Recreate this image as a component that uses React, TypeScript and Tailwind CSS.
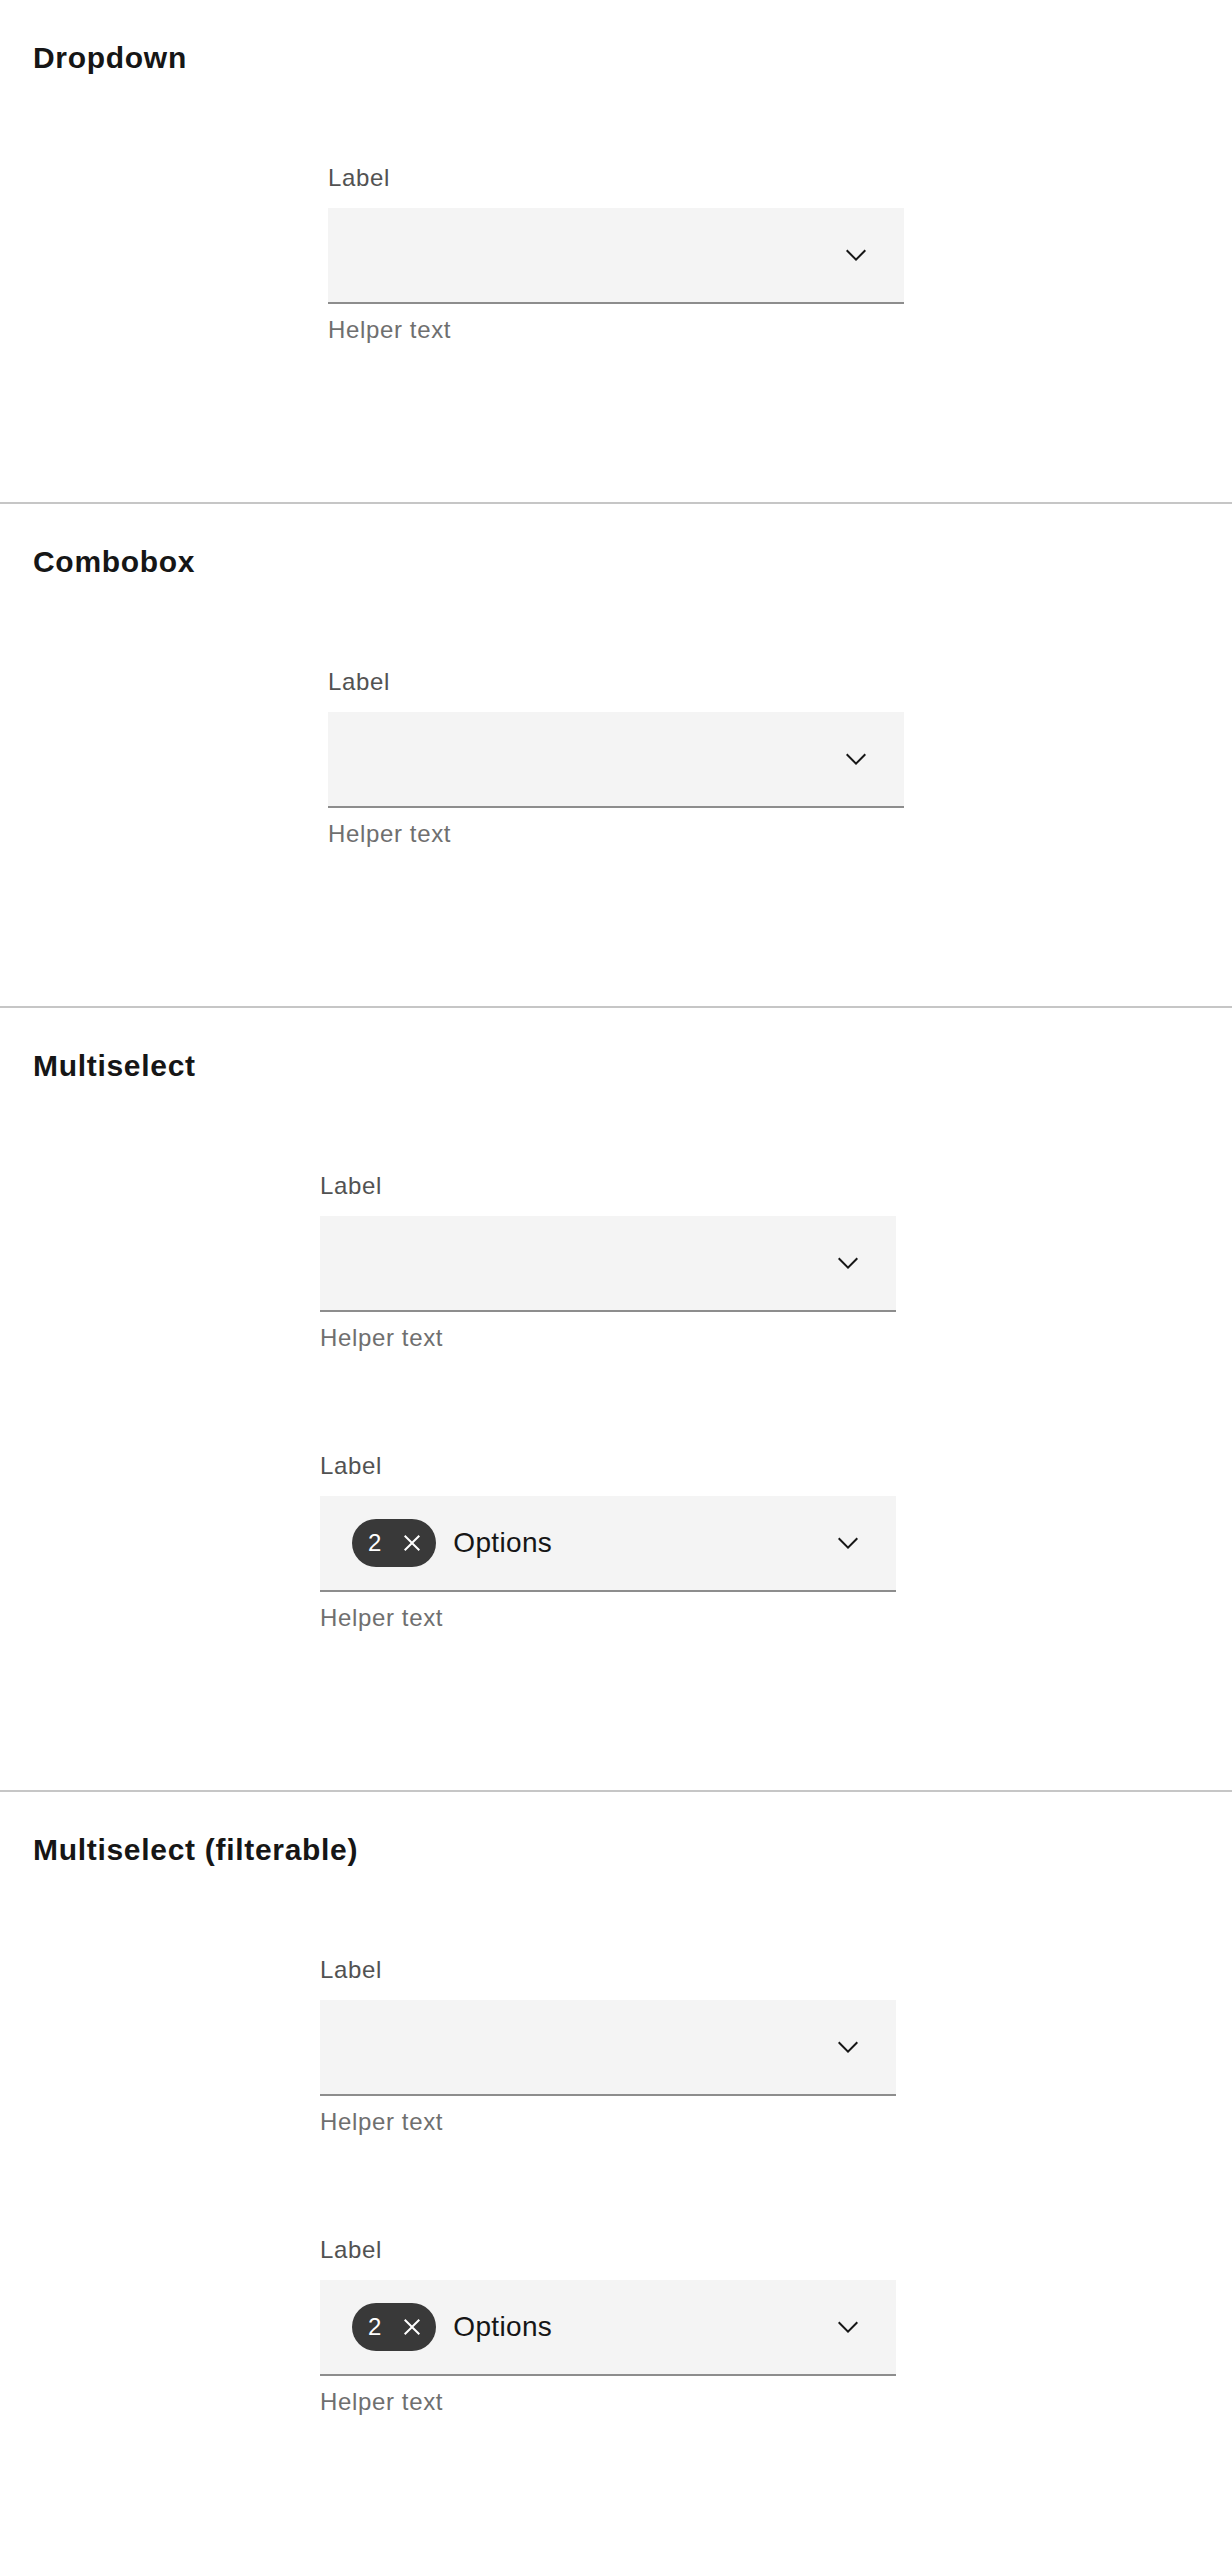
import { ReactNode } from "react";

function ChevronDown() {
  return (
    <svg width="32" height="32" viewBox="0 0 16 16" fill="#161616" aria-hidden>
      <path d="M8 11L3 6 3.7 5.3 8 9.6 12.3 5.3 13 6z" />
    </svg>
  );
}

function CloseIcon() {
  return (
    <svg width="32" height="32" viewBox="0 0 16 16" fill="#ffffff" aria-hidden>
      <path d="M12 4.7L11.3 4 8 7.3 4.7 4 4 4.7 7.3 8 4 11.3 4.7 12 8 8.7 11.3 12 12 11.3 8.7 8z" />
    </svg>
  );
}

function Field({ selected, offset }: { selected?: boolean; offset: "wide" | "narrow" }) {
  return (
    <div className={offset === "wide" ? "ml-[328px] w-[576px]" : "ml-[320px] w-[576px]"}>
      <label className="block text-[24px] leading-[32px] tracking-[0.64px] text-[#525252]">Label</label>
      <div className="mt-[14px] flex h-[96px] items-center border-b-2 border-[#8d8d8d] bg-[#f4f4f4] pl-[32px] pr-[32px]">
        {selected && (
          <>
            <span className="flex h-[48px] items-center rounded-full bg-[#393939] pl-[16px] pr-[8px] text-[24px] text-white">
              2
              <span className="ml-[15px] flex">
                <CloseIcon />
              </span>
            </span>
            <span className="ml-[17px] text-[28px] tracking-[0.32px] text-[#161616]">Options</span>
          </>
        )}
        <span className="ml-auto flex">
          <ChevronDown />
        </span>
      </div>
      <p className="mt-[10px] text-[24px] leading-[32px] tracking-[0.64px] text-[#6f6f6f]">Helper text</p>
    </div>
  );
}

function Section({ title, children, last }: { title: string; children: ReactNode; last?: boolean }) {
  return (
    <section className={last ? "pt-[38px] pb-[156px]" : "border-b-2 border-[#c6c6c6] pt-[38px] pb-[156px]"}>
      <h2 className="pl-[33px] text-[30px] font-bold leading-[40px] tracking-[0.7px] text-[#161616]">{title}</h2>
      <div className="mt-[84px] flex flex-col gap-[96px]">{children}</div>
    </section>
  );
}

export default function App() {
  return (
    <div className="w-[1232px] bg-white font-['Liberation_Sans',Arial,sans-serif]">
      <Section title="Dropdown">
        <Field offset="wide" />
      </Section>
      <Section title="Combobox">
        <Field offset="wide" />
      </Section>
      <Section title="Multiselect">
        <Field offset="narrow" />
        <Field offset="narrow" selected />
      </Section>
      <Section title="Multiselect (filterable)" last>
        <Field offset="narrow" />
        <Field offset="narrow" selected />
      </Section>
    </div>
  );
}
